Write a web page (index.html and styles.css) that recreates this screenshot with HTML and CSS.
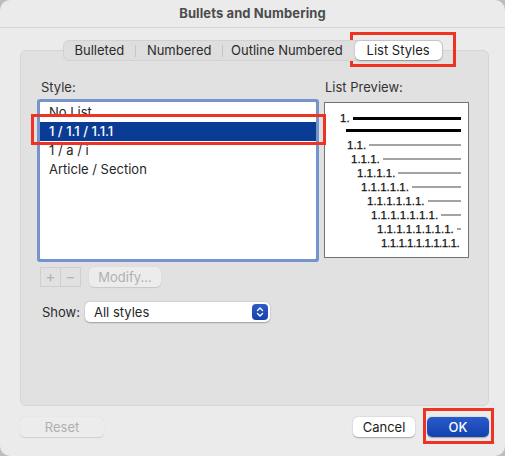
FILE: index.html
```html
<!DOCTYPE html>
<html>
<head>
<meta charset="utf-8">
<link rel="stylesheet" href="styles.css">
</head>
<body>
<div class="window">
  <div class="titlebar">Bullets and Numbering</div>
  <div class="content">
    <div class="tabs">
      <div class="seg seg-1">Bulleted</div>
      <div class="sep"></div>
      <div class="seg seg-2">Numbered</div>
      <div class="sep"></div>
      <div class="seg seg-3">Outline Numbered</div>
      <div class="seg seg-4 active">List Styles</div>
    </div>
    <div class="group">
      <div class="columns">
        <div class="col-left">
          <div class="label">Style:</div>
          <div class="listbox">
            <div class="row">No List</div>
            <div class="row selected">1 / 1.1 / 1.1.1</div>
            <div class="row">1 / a / i</div>
            <div class="row">Article / Section</div>
          </div>
          <div class="tools">
            <div class="pm"><span class="pm-btn">+</span><span class="pm-btn">−</span></div>
            <div class="btn disabled modify">Modify...</div>
          </div>
        </div>
        <div class="col-right">
          <div class="label">List Preview:</div>
          <div class="preview">
            <div class="pv pv-first"><span class="num">1.</span><span class="bar black"></span></div>
            <div class="pv pv-cont"><span class="bar black"></span></div>
            <div class="pv pv-l2"><span class="num">1.1.</span><span class="bar"></span></div>
            <div class="pv pv-l3"><span class="num">1.1.1.</span><span class="bar"></span></div>
            <div class="pv pv-l4"><span class="num">1.1.1.1.</span><span class="bar"></span></div>
            <div class="pv pv-l5"><span class="num">1.1.1.1.1.</span><span class="bar"></span></div>
            <div class="pv pv-l6"><span class="num">1.1.1.1.1.1.</span><span class="bar"></span></div>
            <div class="pv pv-l7"><span class="num">1.1.1.1.1.1.1.</span><span class="bar"></span></div>
            <div class="pv pv-l8"><span class="num">1.1.1.1.1.1.1.1.</span><span class="bar"></span></div>
            <div class="pv pv-l9"><span class="num tight">1.1.1.1.1.1.1.1.1.</span></div>
          </div>
        </div>
      </div>
      <div class="show-row">
        <span class="show-label">Show:</span>
        <div class="select">
          <span>All styles</span>
          <span class="stepper">
            <svg width="16" height="16" viewBox="0 0 16 16"><path d="M5.5 6.5 L8 4 L10.5 6.5" fill="none" stroke="#fff" stroke-width="1.4" stroke-linecap="round" stroke-linejoin="round"/><path d="M5.5 9.5 L8 12 L10.5 9.5" fill="none" stroke="#fff" stroke-width="1.4" stroke-linecap="round" stroke-linejoin="round"/></svg>
          </span>
        </div>
      </div>
    </div>
    <div class="footer">
      <div class="btn disabled reset">Reset</div>
      <div class="spacer"></div>
      <div class="btn cancel">Cancel</div>
      <div class="btn ok">OK</div>
    </div>
  </div>
  <div class="mark mark-tab"></div>
  <div class="mark mark-row"></div>
  <div class="mark mark-ok"></div>
</div>
</body>
</html>
```

FILE: styles.css
```css
* { box-sizing: border-box; }
html, body { margin: 0; padding: 0; background: #bdbdbd; }
body { font-family: "Inter", "Liberation Sans", sans-serif; font-size: 13px; color: #262626; }

.window {
  position: relative;
  width: 505px;
  height: 456px;
  background: #ebebeb;
  border-radius: 10px;
  overflow: hidden;
  display: flex;
  flex-direction: column;
}

.titlebar {
  height: 28px;
  line-height: 27px;
  border-bottom: 1px solid #d5d5d5;
  text-align: center;
  font-weight: 700;
  color: #4c4c4c;
  letter-spacing: 0.1px;
}

.content {
  padding: 12px 16px 0 20px;
  display: flex;
  flex-direction: column;
}

.tabs {
  position: relative;
  z-index: 1;
  align-self: center;
  margin-left: -4px;
  display: flex;
  align-items: center;
  height: 21px;
  width: 380px;
  background: #dedede;
  border: 1px solid #d2d2d2;
  border-radius: 6px;
  color: #2a2a2a;
}
.seg { height: 19px; line-height: 19px; text-align: center; }
.seg-1 { width: 72px; }
.seg-2 { width: 86px; }
.seg-3 { width: 128px; }
.seg-4 { width: 87px; margin-left: 4px; }
.sep { width: 1px; height: 12px; background: #c6c6c6; }
.seg.active {
  background: #fff;
  border-radius: 5px;
  box-shadow: 0 0.5px 1.5px rgba(0,0,0,0.3);
  color: #1d1d1d;
}

.group {
  margin-top: -11px;
  height: 356px;
  background: #e1e1e1;
  border: 1px solid #d6d6d6;
  border-radius: 6px;
  padding: 28px 0 0 19px;
}

.columns { display: flex; gap: 8px; }
.col-left { width: 276px; }
.col-right { width: 145px; }
.label { height: 16px; line-height: 16px; padding-left: 1px; margin-bottom: 7px; color: #333; }

.listbox {
  height: 157px;
  background: #fff;
  box-shadow: 0 0 0 3px #7594cb;
  border-radius: 1px;
  padding-top: 1px;
}
.row { height: 19px; line-height: 19px; padding-left: 9px; color: #262626; }
.row.selected { background: #0b3c95; color: #fff; font-weight: 500; }

.tools { display: flex; gap: 8px; margin-top: 8px; height: 20px; }
.pm {
  display: flex;
  width: 41px;
  height: 20px;
  border: 1px solid #cfcfcf;
}
.pm-btn {
  flex: 1;
  text-align: center;
  line-height: 18px;
  color: #b2b2b2;
  font-size: 15px;
}
.pm-btn + .pm-btn { border-left: 1px solid #cfcfcf; }

.btn {
  height: 20px;
  line-height: 20px;
  text-align: center;
  border-radius: 5px;
}
.btn.disabled {
  background: #ececec;
  color: #b0b0b0;
  box-shadow: 0 0.5px 1px rgba(0,0,0,0.12);
}
.modify { width: 72px; }

.preview {
  height: 156px;
  background: #fff;
  border: 1px solid #737373;
  padding: 9px 7px 0 0;
}
.pv {
  display: flex;
  align-items: center;
  height: 14px;
  font-family: "Liberation Sans", Arial, sans-serif;
  font-size: 11.5px;
  color: #111;
}
.pv-first { height: 12px; padding-left: 15px; }
.pv-cont { height: 12px; padding-left: 21px; margin-bottom: 2px; }
.pv-l2 { padding-left: 22px; }
.pv-l3 { padding-left: 26px; }
.pv-l4 { padding-left: 32px; }
.pv-l5 { padding-left: 36px; }
.pv-l6 { padding-left: 42px; }
.pv-l7 { padding-left: 46px; }
.pv-l8 { padding-left: 52px; }
.pv-l9 { padding-left: 56px; }
.num { white-space: nowrap; -webkit-text-stroke: 0.25px #111; }
.num.tight { letter-spacing: -0.45px; }
.bar { flex: 1; height: 2.5px; background: #a3a3a3; margin-left: 3px; }
.bar.black { height: 3px; background: #000; }
.pv-cont .bar { margin-left: 0; }

.show-row { display: flex; align-items: center; margin-top: 15px; height: 20px; }
.show-label { width: 45px; padding-left: 2px; color: #2a2a2a; }
.select {
  width: 185px;
  height: 20px;
  background: #fff;
  border-radius: 5px;
  box-shadow: 0 0.5px 1.5px rgba(0,0,0,0.3);
  display: flex;
  align-items: center;
  justify-content: space-between;
  padding: 0 2px 0 9px;
}
.stepper {
  width: 16px;
  height: 16px;
  border-radius: 4px;
  background: linear-gradient(#2c5cc9, #1542aa);
  display: flex;
}

.footer { display: flex; margin-top: 11px; height: 20px; }
.spacer { flex: 1; }
.reset { width: 84px; background: #f1f1f1; }
.cancel {
  width: 62px;
  background: #fff;
  color: #1d1d1d;
  box-shadow: 0 0.5px 1.5px rgba(0,0,0,0.3);
}
.ok {
  width: 62px;
  margin-left: 12px;
  background: linear-gradient(#2a5acb, #1142ad);
  color: #fff;
  font-weight: 500;
  box-shadow: 0 0.5px 1.5px rgba(0,0,0,0.3);
}

.mark { position: absolute; border: 3px solid #ef3323; }
.mark-tab { left: 350px; top: 32px; width: 106px; height: 35px; }
.mark-row { left: 31px; top: 114px; width: 295px; height: 31px; }
.mark-ok { left: 423px; top: 408px; width: 71px; height: 36px; }
```
